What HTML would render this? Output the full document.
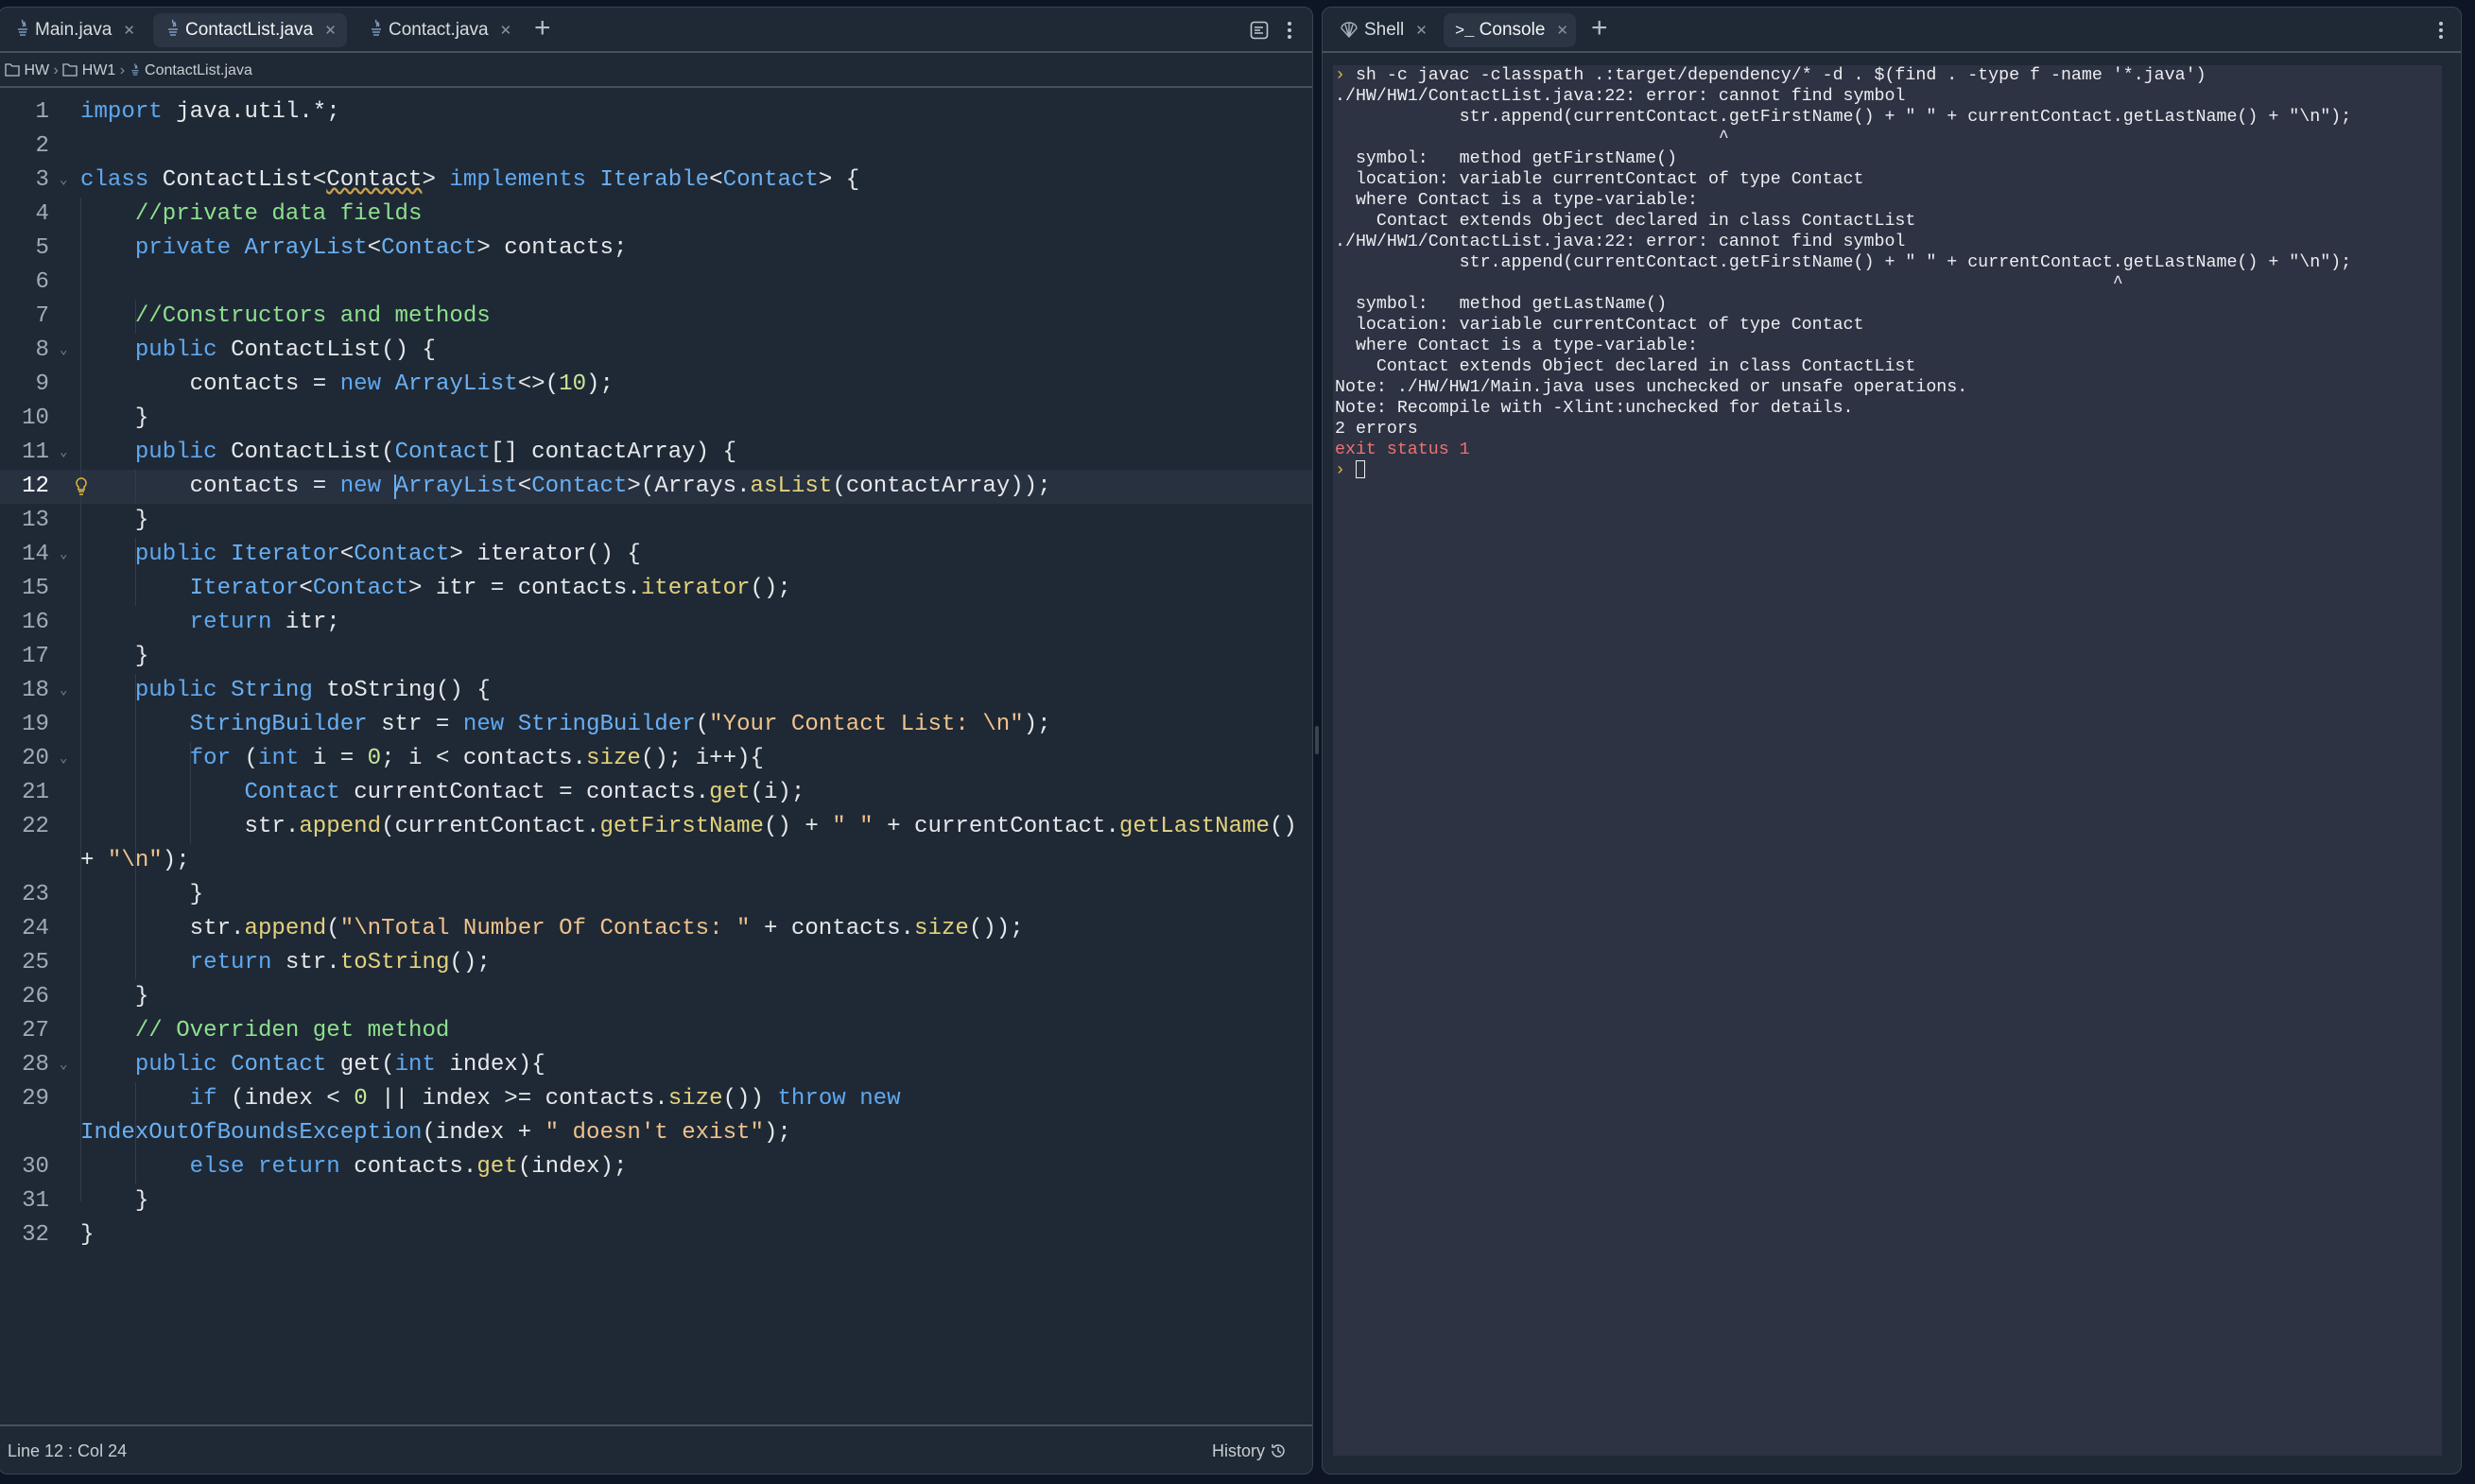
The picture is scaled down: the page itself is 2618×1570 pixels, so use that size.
<!DOCTYPE html>
<html><head><meta charset="utf-8">
<style>
*{margin:0;padding:0;box-sizing:border-box}
body{width:2618px;height:1570px;background:#0e1525;position:relative;overflow:hidden;font-family:"Liberation Sans",sans-serif;color:#e4e6ea}
.panel{position:absolute;background:#1f2935;border:1px solid #3a4350;border-radius:10px;overflow:hidden}
.bar{position:absolute;left:0;right:0;top:0;height:48px;border-bottom:2px solid #4a505a}
.tab{position:absolute;top:6px;height:36px;border-radius:8px;font-size:19px;line-height:36px;color:#d8dbe0;white-space:nowrap}
.tab.act{background:#2b3543;color:#f2f3f5}
.x{color:#8a919b;font-size:15px;margin-left:12px}
.plus{position:absolute;top:4px;font-size:30px;color:#b8bec6;line-height:36px;font-weight:300}
.row{position:absolute;left:0;height:36px;line-height:36px;font-family:"Liberation Mono",monospace;font-size:24.1px;white-space:pre}
.num{position:absolute;right:0;width:60px;text-align:right;color:#a3aab4}
.code{position:absolute;left:86px;color:#e6e8eb}
.k{color:#5fa8f0}.t{color:#6ab0f3}.m{color:#e3d27c}.s{color:#f0c28c}.c{color:#8ee08e}.n{color:#cbe69a}
.fold{position:absolute;left:64px;color:#7c8591;font-size:14px}
.guide{position:absolute;width:1px;background:#333d4a}
.con{position:absolute;left:1410px;top:69px;width:1173px;height:1471px;background:#2d3343}
.cl{position:absolute;left:2px;font-family:"Liberation Mono",monospace;font-size:18.3px;line-height:22px;height:22px;white-space:pre;color:#eceef1}
</style></head><body>

<div class="panel" style="left:-2px;top:7px;width:1391px;height:1553px;">
  <div class="bar">
    <div class="tab" style="left:12px;padding:0 6px;"><svg width="14" height="22" viewBox="0 0 14 22" style="vertical-align:-4px;margin-right:6px"><path d="M7 2c-2 3 3 4 0 7M9 4c-1 2 2 3 0 5M2 12h10M3 15h8M4 18h6" stroke="#7f9bbd" stroke-width="1.5" fill="none"/></svg>Main.java<span class="x">✕</span></div>
    <div class="tab act" style="left:163px;width:205px;padding-left:14px;"><svg width="14" height="22" viewBox="0 0 14 22" style="vertical-align:-4px;margin-right:6px"><path d="M7 2c-2 3 3 4 0 7M9 4c-1 2 2 3 0 5M2 12h10M3 15h8M4 18h6" stroke="#7f9bbd" stroke-width="1.5" fill="none"/></svg>ContactList.java<span class="x">✕</span></div>
    <div class="tab" style="left:386px;padding:0 6px;"><svg width="14" height="22" viewBox="0 0 14 22" style="vertical-align:-4px;margin-right:6px"><path d="M7 2c-2 3 3 4 0 7M9 4c-1 2 2 3 0 5M2 12h10M3 15h8M4 18h6" stroke="#7f9bbd" stroke-width="1.5" fill="none"/></svg>Contact.java<span class="x">✕</span></div>
    <div class="plus" style="left:566px;">+</div>
    <svg style="position:absolute;left:1323px;top:14px" width="20" height="20" viewBox="0 0 20 20"><rect x="1.5" y="1.5" width="17" height="17" rx="3" fill="none" stroke="#c3c8cf" stroke-width="1.6"/><path d="M5 7h9M5 10h6M5 13h9" stroke="#c3c8cf" stroke-width="1.6"/></svg>
    <svg style="position:absolute;left:1362px;top:14px" width="6" height="20"><circle cx="3" cy="3" r="2" fill="#c3c8cf"/><circle cx="3" cy="10" r="2" fill="#c3c8cf"/><circle cx="3" cy="17" r="2" fill="#c3c8cf"/></svg>
  </div>
  <div style="position:absolute;left:0;right:0;top:48px;height:37px;border-bottom:2px solid #4a505a;font-size:16px;line-height:37px;color:#c8ccd2;white-space:nowrap">
    <span style="position:absolute;left:6px"><svg width="16" height="14" viewBox="0 0 16 14" style="vertical-align:-2px"><path d="M1 1h5l2 2h7v10H1z" fill="none" stroke="#b8bec6" stroke-width="1.3"/></svg> HW <span style="color:#8a919b">›</span> <svg width="16" height="14" viewBox="0 0 16 14" style="vertical-align:-2px"><path d="M1 1h5l2 2h7v10H1z" fill="none" stroke="#b8bec6" stroke-width="1.3"/></svg> HW1 <span style="color:#8a919b">›</span> <svg width="12" height="16" viewBox="0 0 14 22" style="vertical-align:-3px"><path d="M7 2c-2 3 3 4 0 7M9 4c-1 2 2 3 0 5M2 12h10M3 15h8M4 18h6" stroke="#7f9bbd" stroke-width="1.5" fill="none"/></svg> ContactList.java</span>
  </div>
  <div style="position:absolute;left:0;right:0;top:489px;height:36px;background:#273140"></div>
  <div class="guide" style="left:86px;top:201px;height:1062px"></div>
  <div class="guide" style="left:144px;top:309px;height:36px"></div>
  <div class="guide" style="left:144px;top:489px;height:36px"></div>
  <div class="guide" style="left:144px;top:561px;height:72px"></div>
  <div class="guide" style="left:144px;top:705px;height:324px"></div>
  <div class="guide" style="left:202px;top:777px;height:108px"></div>
  <div class="guide" style="left:144px;top:1137px;height:108px"></div>
  <div style="position:absolute;left:418px;top:494px;width:2px;height:26px;background:#6ab0f3"></div>
  <svg style="position:absolute;left:81px;top:497px" width="12" height="20" viewBox="0 0 12 20"><path d="M6 1a5 5 0 0 0-3 9v3h6v-3a5 5 0 0 0-3-9zM3 15h6M4 18h4" fill="none" stroke="#e8b83a" stroke-width="1.5"/></svg>
  <div id="code"></div>
  <div style="position:absolute;left:0;right:0;top:1499px;border-top:2px solid #4a505a;height:54px;font-size:18px;line-height:52px;color:#c8ccd2">
    <span style="position:absolute;left:9px">Line 12 : Col 24</span>
    <span style="position:absolute;left:1283px">History <svg width="18" height="18" viewBox="0 0 18 18" style="vertical-align:-3px"><path d="M3 9a6 6 0 1 0 2-4.5M3 2v3h3M9 5v4l3 2" fill="none" stroke="#c3c8cf" stroke-width="1.5"/></svg></span>
  </div>
</div>

<div style="position:absolute;left:1391px;top:768px;width:4px;height:30px;border-radius:2px;background:#3a4350"></div>

<div class="panel" style="left:1398px;top:7px;width:1206px;height:1553px;background:#1f2935">
  <div class="bar">
    <div class="tab" style="left:12px;padding:0 6px;"><svg width="20" height="20" viewBox="0 0 20 20" style="vertical-align:-4px;margin-right:6px"><path d="M10 18L2 9a8 6 0 0 1 16 0zM10 18L6 5M10 18V3M10 18l4-13" fill="none" stroke="#a9afb8" stroke-width="1.4"/></svg>Shell<span class="x">✕</span></div>
    <div class="tab act" style="left:128px;width:140px;padding-left:12px;"><span style="font-family:'Liberation Mono',monospace;font-size:17px">&gt;_</span> Console<span class="x">✕</span></div>
    <div class="plus" style="left:284px;">+</div>
    <svg style="position:absolute;left:1180px;top:14px" width="6" height="20"><circle cx="3" cy="3" r="2" fill="#c3c8cf"/><circle cx="3" cy="10" r="2" fill="#c3c8cf"/><circle cx="3" cy="17" r="2" fill="#c3c8cf"/></svg>
  </div>
</div>
<div class="con" id="con"></div>

<script>
const rows=[
["1",'<span class="k">import</span> java.util.*;'],
["2",''],
["3",'<span class="k">class</span> ContactList&lt;<span style="text-decoration:underline wavy #c9a24a">Contact</span>&gt; <span class="k">implements</span> <span class="t">Iterable</span>&lt;<span class="t">Contact</span>&gt; {',1],
["4",'    <span class="c">//private data fields</span>'],
["5",'    <span class="k">private</span> <span class="t">ArrayList</span>&lt;<span class="t">Contact</span>&gt; contacts;'],
["6",''],
["7",'    <span class="c">//Constructors and methods</span>'],
["8",'    <span class="k">public</span> ContactList() {',1],
["9",'        contacts = <span class="k">new</span> <span class="t">ArrayList</span>&lt;&gt;(<span class="n">10</span>);'],
["10",'    }'],
["11",'    <span class="k">public</span> ContactList(<span class="t">Contact</span>[] contactArray) {',1],
["12",'        contacts = <span class="k">new</span> <span class="t">ArrayList</span>&lt;<span class="t">Contact</span>&gt;(Arrays.<span class="m">asList</span>(contactArray));'],
["13",'    }'],
["14",'    <span class="k">public</span> <span class="t">Iterator</span>&lt;<span class="t">Contact</span>&gt; iterator() {',1],
["15",'        <span class="t">Iterator</span>&lt;<span class="t">Contact</span>&gt; itr = contacts.<span class="m">iterator</span>();'],
["16",'        <span class="k">return</span> itr;'],
["17",'    }'],
["18",'    <span class="k">public</span> <span class="t">String</span> toString() {',1],
["19",'        <span class="t">StringBuilder</span> str = <span class="k">new</span> <span class="t">StringBuilder</span>(<span class="s">"Your Contact List: \\n"</span>);'],
["20",'        <span class="k">for</span> (<span class="k">int</span> i = <span class="n">0</span>; i &lt; contacts.<span class="m">size</span>(); i++){',1],
["21",'            <span class="t">Contact</span> currentContact = contacts.<span class="m">get</span>(i);'],
["22",'            str.<span class="m">append</span>(currentContact.<span class="m">getFirstName</span>() + <span class="s">" "</span> + currentContact.<span class="m">getLastName</span>()'],
["",'+ <span class="s">"\\n"</span>);'],
["23",'        }'],
["24",'        str.<span class="m">append</span>(<span class="s">"\\nTotal Number Of Contacts: "</span> + contacts.<span class="m">size</span>());'],
["25",'        <span class="k">return</span> str.<span class="m">toString</span>();'],
["26",'    }'],
["27",'    <span class="c">// Overriden get method</span>'],
["28",'    <span class="k">public</span> <span class="t">Contact</span> get(<span class="k">int</span> index){',1],
["29",'        <span class="k">if</span> (index &lt; <span class="n">0</span> || index &gt;= contacts.<span class="m">size</span>()) <span class="k">throw</span> <span class="k">new</span>'],
["",'<span class="t">IndexOutOfBoundsException</span>(index + <span class="s">" doesn\'t exist"</span>);'],
["30",'        <span class="k">else</span> <span class="k">return</span> contacts.<span class="m">get</span>(index);'],
["31",'    }'],
["32",'}']
];
let h='';
rows.forEach((r,i)=>{
 const top=93+i*36;
 const cur=r[0]==="12";
 h+=`<div class="row" style="top:${top}px;width:1390px"><span class="num" style="left:0;width:53px;right:auto;${cur?'color:#fff':''}">${r[0]}</span>${r[2]?'<span class="fold">⌄</span>':''}<span class="code">${r[1]}</span></div>`;
});
document.getElementById('code').innerHTML=h;
const cl=[
'<span style="color:#e0b040">›</span> sh -c javac -classpath .:target/dependency/* -d . $(find . -type f -name \'*.java\')',
'./HW/HW1/ContactList.java:22: error: cannot find symbol',
'            str.append(currentContact.getFirstName() + " " + currentContact.getLastName() + "\\n");',
'                                     ^',
'  symbol:   method getFirstName()',
'  location: variable currentContact of type Contact',
'  where Contact is a type-variable:',
'    Contact extends Object declared in class ContactList',
'./HW/HW1/ContactList.java:22: error: cannot find symbol',
'            str.append(currentContact.getFirstName() + " " + currentContact.getLastName() + "\\n");',
'                                                                           ^',
'  symbol:   method getLastName()',
'  location: variable currentContact of type Contact',
'  where Contact is a type-variable:',
'    Contact extends Object declared in class ContactList',
'Note: ./HW/HW1/Main.java uses unchecked or unsafe operations.',
'Note: Recompile with -Xlint:unchecked for details.',
'2 errors',
'<span style="color:#f07171">exit status 1</span>',
'<span style="color:#e0b040">›</span> <span style="display:inline-block;width:10px;height:19px;border:1.5px solid #eceef1;vertical-align:-4px"></span>'
];
let c='';
cl.forEach((l,i)=>{c+=`<div class="cl" style="top:${i*22}px">${l.replace(/&(?!lt|gt)/g,'&amp;')}</div>`});
document.getElementById('con').innerHTML=c;
</script>
</body></html>
